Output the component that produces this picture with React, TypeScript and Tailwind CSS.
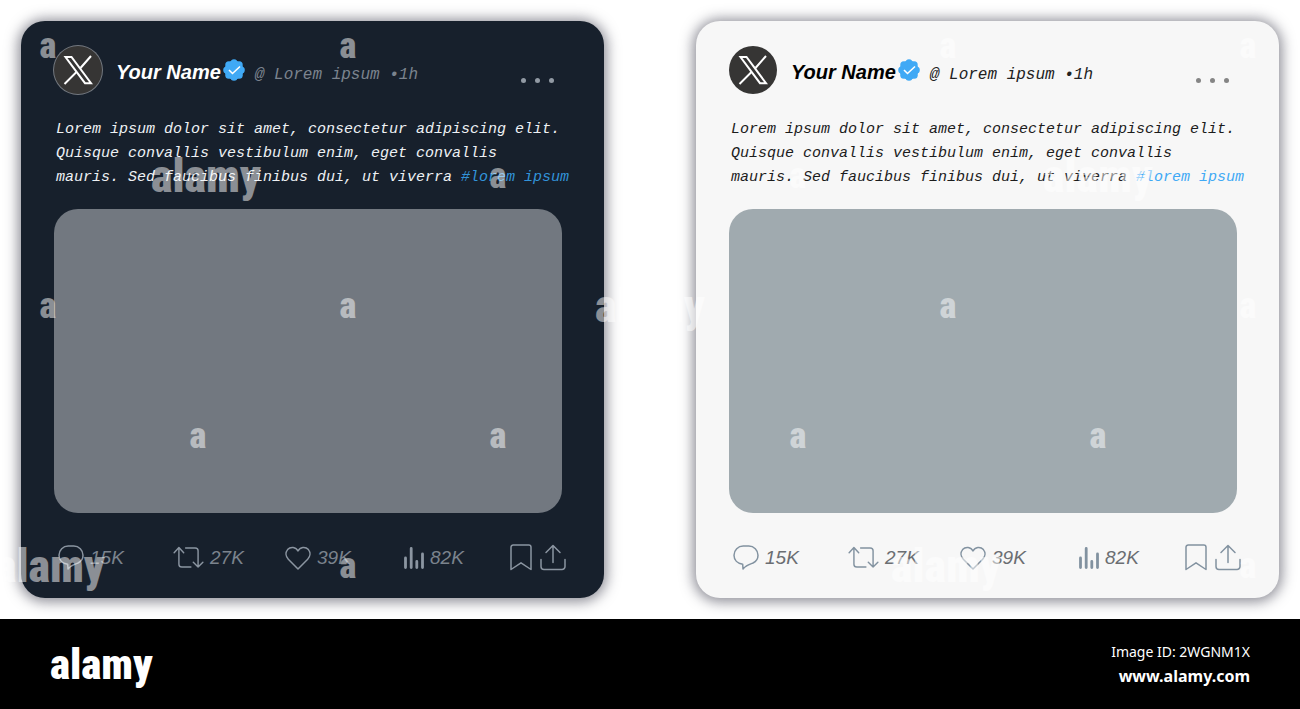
import type { ReactNode } from "react";

import clsx from "clsx";

type Theme = "dark" | "light";

type TweetCardProps = {
  theme: Theme;
};

type ActionProps = {
  label: string;
  count?: string;
  countClassName?: string;
  children: ReactNode;
};

type Mark = {
  text: "a" | "alamy";
  className: string;
};

const marks: Mark[] = [
  { text: "a", className: "left-[48px] top-[46px]" },
  { text: "a", className: "left-[348px] top-[46px]" },
  { text: "a", className: "left-[948px] top-[46px]" },
  { text: "a", className: "left-[1248px] top-[46px]" },
  { text: "alamy", className: "left-[206px] top-[176px]" },
  { text: "a", className: "left-[498px] top-[176px]" },
  { text: "a", className: "left-[798px] top-[176px]" },
  { text: "alamy", className: "left-[1098px] top-[176px]" },
  { text: "a", className: "left-[48px] top-[306px]" },
  { text: "a", className: "left-[348px] top-[306px]" },
  { text: "alamy", className: "left-[650px] top-[306px]" },
  { text: "a", className: "left-[948px] top-[306px]" },
  { text: "a", className: "left-[1248px] top-[306px]" },
  { text: "a", className: "left-[198px] top-[436px]" },
  { text: "a", className: "left-[498px] top-[436px]" },
  { text: "a", className: "left-[798px] top-[436px]" },
  { text: "a", className: "left-[1098px] top-[436px]" },
  { text: "alamy", className: "left-[50px] top-[566px]" },
  { text: "a", className: "left-[348px] top-[566px]" },
  { text: "alamy", className: "left-[946px] top-[566px]" },
  { text: "a", className: "left-[1248px] top-[566px]" },
];

const stroke = {
  fill: "none",
  stroke: "currentColor",
  strokeWidth: 1.5,
  strokeLinecap: "round",
  strokeLinejoin: "round",
} as const;

function XLogo() {
  return (
    <svg
      viewBox="0 0 48 48"
      className="size-full"
      fill="none"
      stroke="white"
      strokeWidth="2"
      aria-hidden="true"
    >
      <path d="M11.500 11h6L37 37.200h-6z" />
      <path d="M37 10L26.500 22M22.500 26L10.500 38" />
    </svg>
  );
}

function VerifiedBadge() {
  return (
    <svg viewBox="0 0 22 22" className="size-[22px] shrink-0" role="img" aria-label="Verified">
      <g fill="#40a9f5">
        <circle cx="11" cy="11" r="9.500" />
        <circle cx="11" cy="3.700" r="3.500" />
        <circle cx="16.200" cy="5.800" r="3.500" />
        <circle cx="18.300" cy="11" r="3.500" />
        <circle cx="16.200" cy="16.200" r="3.500" />
        <circle cx="11" cy="18.300" r="3.500" />
        <circle cx="5.800" cy="16.200" r="3.500" />
        <circle cx="3.700" cy="11" r="3.500" />
        <circle cx="5.800" cy="5.800" r="3.500" />
      </g>
      <path d="M6 11l3.500 3.500L17 7.500" fill="none" stroke="white" strokeWidth="1.600" />
    </svg>
  );
}

function ReplyIcon() {
  return (
    <svg viewBox="0 0 26 25" className="h-[25px] w-[26px]" {...stroke}>
      <path d="M9.700 19.300C4.500 18.500 1 15 1 10.200A9.200 9.200 0 0 1 10.200 1h5.600A9.200 9.200 0 0 1 25 10.200c0 3.600-1.800 6.200-5 7.800-3.300 1.200-7 2.200-10 6z" />
    </svg>
  );
}

function RepostIcon() {
  return (
    <svg viewBox="0 0 32 24" className="h-[23px] w-[31px]" {...stroke}>
      <path d="M6 2v17a3 3 0 0 0 3 3h9.500M1 7l5-5.500L11 7" />
      <path d="M13 2h10a3 3 0 0 1 3 3v17M21 17l5 5 5-5" />
    </svg>
  );
}

function LikeIcon() {
  return (
    <svg viewBox="0 0 26 24" className="h-6 w-[26px]" {...stroke}>
      <path d="M13 5C11 .8 5.500.2 2.600 3.600.200 6.600.700 10.500 3.300 13.200L13 23l9.700-9.800c2.600-2.700 3.100-6.600.7-9.600C20.500.2 15 .8 13 5z" />
    </svg>
  );
}

function ViewsIcon() {
  return (
    <svg viewBox="0 0 20 24" className="h-6 w-5" {...stroke} strokeWidth={2.8}>
      <path d="M1.500 12v9.500M7.200 2.500v19M12.800 15.500v6M18.500 8v13.500" />
    </svg>
  );
}

function BookmarkIcon() {
  return (
    <svg viewBox="0 0 22 27" className="h-[27px] w-[22px]" {...stroke}>
      <path d="M1 25.500V3.200A2.200 2.200 0 0 1 3.200 1h15.600A2.200 2.200 0 0 1 21 3.200v22.300l-10-6.700z" />
    </svg>
  );
}

function ShareIcon() {
  return (
    <svg viewBox="0 0 26 27" className="h-[27px] w-[26px]" {...stroke}>
      <path d="M13 18.500V1.500M6 8.500l7-7 7 7" />
      <path d="M1 15.500v7A3 3 0 0 0 4 25.500h18a3 3 0 0 0 3-3v-7" />
    </svg>
  );
}

function Action({ label, count, countClassName, children }: ActionProps) {
  return (
    <button type="button" aria-label={label} className="flex items-center gap-1.5">
      {children}
      {count && (
        <span
          className={clsx(
            "font-['Liberation_Sans',sans-serif] text-[19px] leading-6 italic",
            countClassName,
          )}
        >
          {count}
        </span>
      )}
    </button>
  );
}

function TweetCard({ theme }: TweetCardProps) {
  const dark = theme === "dark";
  const countClassName = dark ? "text-[#7b838d]" : "text-[#6b6e72]";

  return (
    <article
      className={clsx(
        "flex flex-col rounded-3xl pt-[25px] pr-[42px] pb-[26px] pl-[33px] shadow-[0_1px_13px_3px_rgba(50,50,65,0.55)]",
        dark ? "bg-[#17202c]" : "bg-[#f7f7f7]",
      )}
    >
      {/* Author */}
      <header className="flex h-12 items-center">
        <div
          className={clsx(
            "size-12 shrink-0 rounded-full bg-[#363534]",
            dark && "ring-1 ring-[#747980]",
          )}
        >
          <XLogo />
        </div>
        <h2
          className={clsx(
            "ml-3.5 pt-1 font-['Liberation_Sans',sans-serif] text-[20px] leading-6 font-bold whitespace-nowrap italic",
            dark ? "text-white" : "text-black",
          )}
        >
          Your Name
        </h2>
        <div className="ml-0.5">
          <VerifiedBadge />
        </div>
        <p
          className={clsx(
            "ml-2.5 pt-2.5 font-['Liberation_Mono',monospace] text-base leading-6 whitespace-nowrap italic",
            dark ? "text-[#7b838e]" : "text-[#222222]",
          )}
        >
          @ Lorem ipsum •1h
        </p>
        <button
          type="button"
          aria-label="More"
          className={clsx(
            "mr-2 ml-auto flex gap-[9px] pt-5",
            dark ? "text-[#929aa4]" : "text-[#858585]",
          )}
        >
          <span className="size-[5px] rounded-full bg-current" />
          <span className="size-[5px] rounded-full bg-current" />
          <span className="size-[5px] rounded-full bg-current" />
        </button>
      </header>

      <p
        className={clsx(
          "mt-6 ml-0.5 font-['Liberation_Mono',monospace] text-[15px] leading-6 whitespace-nowrap italic",
          dark ? "text-[#eef1f4]" : "text-[#1c1c1c]",
        )}
      >
        Lorem ipsum dolor sit amet, consectetur adipiscing elit.
        <br />
        Quisque convallis vestibulum enim, eget convallis
        <br />
        mauris. Sed faucibus finibus dui, ut viverra{" "}
        <a href="#lorem" className={dark ? "text-[#3293d9]" : "text-[#40a9f5]"}>
          #lorem ipsum
        </a>
      </p>

      {/* Media */}
      <div
        className={clsx(
          "mt-[19px] h-[304px] rounded-3xl",
          dark ? "bg-[#727880]" : "bg-[#a0aaaf]",
        )}
      />

      {/* Actions */}
      <div
        className={clsx(
          "mt-[31px] -mr-1 ml-1 grid grid-cols-[115fr_112fr_119fr_106fr_56fr] items-center",
          dark ? "text-[#8b95a1]" : "text-[#8292a0]",
        )}
      >
        <Action label="Reply" count="15K" countClassName={countClassName}>
          <ReplyIcon />
        </Action>
        <Action label="Repost" count="27K" countClassName={countClassName}>
          <RepostIcon />
        </Action>
        <Action label="Like" count="39K" countClassName={countClassName}>
          <LikeIcon />
        </Action>
        <Action label="Views" count="82K" countClassName={countClassName}>
          <ViewsIcon />
        </Action>
        <div className="flex items-center justify-between">
          <Action label="Bookmark">
            <BookmarkIcon />
          </Action>
          <Action label="Share">
            <ShareIcon />
          </Action>
        </div>
      </div>
    </article>
  );
}

function Watermark() {
  return (
    <div aria-hidden="true" className="pointer-events-none absolute inset-0 overflow-hidden">
      {marks.map(({ text, className }) => (
        <span
          key={className}
          className={clsx(
            "absolute -translate-x-1/2 -translate-y-1/2 font-['Roboto_Condensed','Liberation_Sans_Narrow',sans-serif] leading-none font-black text-white/50",
            text === "alamy" ? "text-[46px]" : "text-[36px]",
            className,
          )}
        >
          {text}
        </span>
      ))}
    </div>
  );
}

export default function App() {
  return (
    <div className="flex min-h-screen flex-col bg-white">
      <main className="relative grid flex-1 grid-cols-2 gap-[92px] p-[21px]">
        <TweetCard theme="dark" />
        <TweetCard theme="light" />
        <Watermark />
      </main>
      <footer className="flex h-[90px] items-center justify-between bg-black px-[50px] text-white">
        <span className="font-['Roboto_Condensed','Liberation_Sans_Narrow',sans-serif] text-[43px] leading-none font-black">
          alamy
        </span>
        <div className="text-right font-['Noto_Sans',sans-serif] leading-6">
          <p className="text-[14px]">Image ID: 2WGNM1X</p>
          <a href="#alamy" className="block text-base font-bold">
            www.alamy.com
          </a>
        </div>
      </footer>
    </div>
  );
}
